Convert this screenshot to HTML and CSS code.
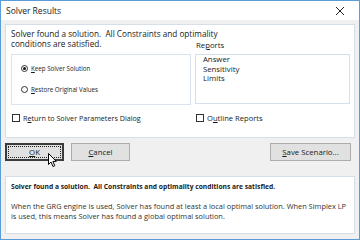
FILE: index.html
```html
<!DOCTYPE html>
<html>
<head>
<meta charset="utf-8">
<title>Solver Results</title>
<link rel="stylesheet" href="styles.css">
</head>
<body>
<div class="window">
	<div class="titlebar">
		<span class="title">Solver Results</span>
		<svg class="close" width="10" height="10" viewBox="0 0 10 10"><path d="M1 1 L9 9 M9 1 L1 9" stroke="#222" stroke-width="1" fill="none"/></svg>
	</div>

	<div class="content">
		<div class="panel">
			<p class="msg">Solver found a solution.&nbsp; All Constraints and optimality<br>conditions are satisfied.</p>
			<div class="cols">
				<div class="left">
					<div class="optbox">
						<div class="radio"><span class="dot on"></span><span><u>K</u>eep Solver Solution</span></div>
						<div class="radio"><span class="dot"></span><span><u>R</u>estore Original Values</span></div>
					</div>
				</div>
				<div class="right">
					<div class="label">Re<u>p</u>orts</div>
					<div class="listbox">
						<div>Answer</div>
						<div>Sensitivity</div>
						<div>Limits</div>
					</div>
				</div>
			</div>
			<div class="checks">
				<div class="check"><span class="box"></span><span>R<u>e</u>turn to Solver Parameters Dialog</span></div>
				<div class="check"><span class="box"></span><span>O<u>u</u>tline Reports</span></div>
			</div>
		</div>

		<div class="buttons">
			<button class="btn default"><span class="focus"><u>O</u>K</span></button>
			<button class="btn"><u>C</u>ancel</button>
			<span class="spacer"></span>
			<button class="btn wide"><u>S</u>ave Scenario...</button>
			<svg class="cursor" width="10" height="15" viewBox="0 0 10 15"><path d="M0.5 0.5 L0.5 11.5 L3 9 L5 13.5 L6.8 12.7 L4.9 8.4 L8.3 8.4 Z" fill="#fff" stroke="#000" stroke-width="1" stroke-linejoin="miter"/></svg>
		</div>

		<div class="info">
			<p class="bold">Solver found a solution.&nbsp; All Constraints and optimality conditions are satisfied.</p>
			<p class="desc">When the GRG engine is used, Solver has found at least a local optimal solution. When Simplex LP<br>is used, this means Solver has found a global optimal solution.</p>
		</div>
	</div>
</div>
</body>
</html>
```

FILE: styles.css
```css
* {
	box-sizing: border-box;
}
body {
	margin: 0;
	background-color: #ffffff;
	font-family: 'Open Sans', 'Noto Sans', sans-serif;
	color: #1a1a1a;
}
p {
	margin: 0;
}
u {
	text-decoration: underline;
	text-underline-offset: 1px;
}
.window {
	width: 360px;
	height: 240px;
	border: 1px solid #5b9bd8;
	background-color: #f0f0f0;
	display: flex;
	flex-direction: column;
}
.titlebar {
	height: 19px;
	background-color: #ffffff;
	display: flex;
	align-items: center;
	padding: 0 14px 0 5px;
	font-size: 8.5px;
}
.title {
	flex: 1;
}
.close {
	display: block;
}
.content {
	position: relative;
	padding: 4px 4px 0 4px;
}
.panel {
	height: 114px;
	background-color: #ffffff;
	border: 1px solid #d6dfe8;
	padding: 4px 4px 0 5px;
	font-size: 8.2px;
}
.msg {
	line-height: 9.5px;
	height: 22px;
}
.cols {
	display: flex;
	gap: 4px;
}
.left {
	width: 181px;
	padding-top: 3px;
}
.optbox {
	height: 51px;
	border: 1px solid #dde3ea;
	padding: 9px 0 0 9px;
	display: flex;
	flex-direction: column;
	gap: 12px;
	font-size: 6.2px;
}
.radio {
	display: flex;
	align-items: center;
	gap: 3px;
	height: 9px;
}
.dot {
	width: 7px;
	height: 7px;
	border: 1px solid #333;
	border-radius: 50%;
	display: flex;
	align-items: center;
	justify-content: center;
}
.dot.on::after {
	content: "";
	width: 3px;
	height: 3px;
	border-radius: 50%;
	background-color: #111;
}
.right {
	width: 156px;
	margin-top: -11px;
	font-size: 7.8px;
}
.label {
	height: 10px;
	line-height: 10px;
	padding-left: 1px;
	margin-bottom: 4px;
}
.listbox {
	height: 50px;
	border: 1px solid #d6e0ea;
	padding: 0 0 0 7px;
	line-height: 9.5px;
}
.checks {
	display: flex;
	margin-top: 9px;
	font-size: 7.2px;
}
.check {
	display: flex;
	align-items: center;
	gap: 3px;
	height: 8px;
}
.check:first-child {
	width: 185px;
	padding-left: 1px;
}
.check:last-child {
	font-size: 7.6px;
}
.box {
	width: 8px;
	height: 8px;
	border: 1px solid #333;
	background-color: #ffffff;
}
.buttons {
	position: relative;
	display: flex;
	gap: 7px;
	margin-top: 5px;
	height: 18px;
	padding-right: 4px;
}
.btn {
	width: 59px;
	height: 18px;
	background-color: #e1e1e1;
	border: 1px solid #adadad;
	font-family: 'Open Sans', 'Noto Sans', sans-serif;
	font-size: 7.8px;
	color: #1a1a1a;
	padding: 0;
	display: flex;
	align-items: center;
	justify-content: center;
}
.btn.default {
	border: 2px solid #3c3c3c;
	padding: 1px;
}
.focus {
	width: 100%;
	height: 100%;
	border: 1px dotted #222;
	display: flex;
	align-items: center;
	justify-content: center;
}
.btn.wide {
	width: 81px;
}
.spacer {
	flex: 1;
}
.cursor {
	position: absolute;
	left: 43px;
	top: 10px;
}
.info {
	margin-top: 15px;
	height: 58px;
	background-color: #ffffff;
	border: 1px solid #d6dfe8;
	padding: 5px 2px 0 5px;
	font-size: 7.4px;
}
.bold {
	font-weight: bold;
	font-size: 6.7px;
	height: 20px;
	line-height: 10px;
}
.desc {
	line-height: 9.5px;
	color: #333;
	white-space: nowrap;
}
```
